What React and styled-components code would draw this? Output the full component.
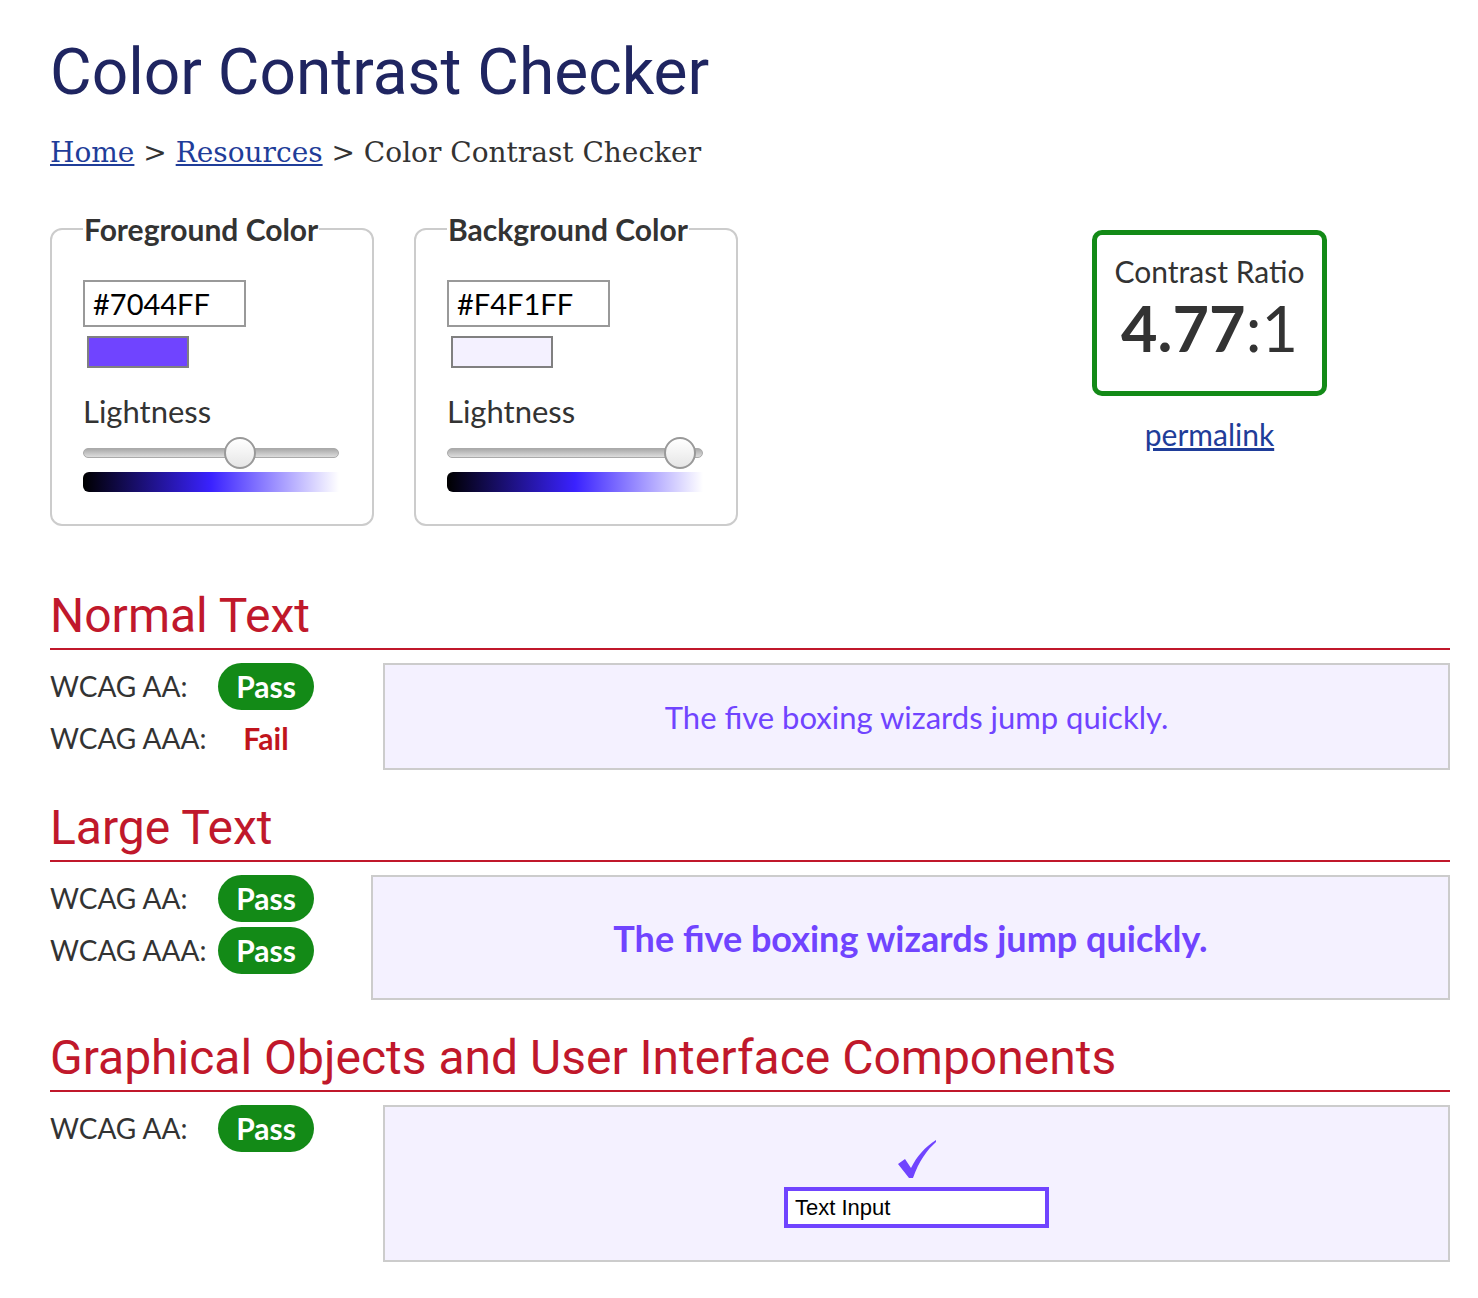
import styled, { createGlobalStyle } from 'styled-components';

const GlobalStyle = createGlobalStyle`
  body {
    margin: 0;
    background: #fff;
    font-family: Lato, "Open Sans", sans-serif;
    color: #333;
  }
`;

const Page = styled.div`
  padding: 0 28px 40px 50px;
`;

const Title = styled.h1`
  font-family: Roboto, sans-serif;
  font-weight: 400;
  font-size: 64px;
  line-height: 80px;
  color: #1f2561;
  margin: 33px 0 0;
`;

const Crumbs = styled.nav`
  font-family: "DejaVu Serif", serif;
  font-size: 28px;
  color: #333;
  margin-top: 23px;
  a {
    color: #1f3d99;
  }
`;

const Top = styled.div`
  display: flex;
  align-items: flex-start;
  margin-top: 42px;
`;

const Panel = styled.fieldset`
  width: 258px;
  border: 2px solid #ccc;
  border-radius: 12px;
  padding: 0 31px 32px;
  margin: 0 40px 0 0;
  box-sizing: content-box;
`;

const Legend = styled.legend`
  font-weight: 700;
  font-size: 30px;
  padding: 0 1px;
  color: #333;
`;

const HexInput = styled.div`
  width: 151px;
  height: 43px;
  border: 2px solid #999;
  margin-top: 33px;
  font-size: 29px;
  line-height: 43px;
  padding-left: 8px;
  color: #000;
`;

const Swatch = styled.div`
  width: 98px;
  height: 28px;
  border: 2px solid #808080;
  background: ${({ $color }) => $color};
  margin: 9px 0 0 4px;
`;

const Label = styled.div`
  font-size: 31px;
  margin-top: 24px;
  line-height: 38px;
`;

const Track = styled.div`
  position: relative;
  height: 8px;
  margin-top: 18px;
  width: 254px;
  border: 1px solid #aaa;
  border-radius: 5px;
  background: linear-gradient(#aaa, #ddd);
`;

const Thumb = styled.div`
  position: absolute;
  top: -12px;
  width: 28px;
  height: 28px;
  margin-left: -15px;
  border-radius: 50%;
  border: 2px solid #999;
  background: linear-gradient(#fff, #e6e6e6);
`;

const Spectrum = styled.div`
  height: 20px;
  width: 256px;
  margin-top: 14px;
  border-radius: 6px 0 0 6px;
  background: linear-gradient(to right, #000, #3a22ff 50%, #fff);
`;

const RatioCol = styled.div`
  margin-left: auto;
  margin-right: 123px;
  margin-top: 19px;
  display: flex;
  flex-direction: column;
  align-items: center;
`;

const RatioBox = styled.div`
  width: 225px;
  height: 156px;
  border: 5px solid #138a17;
  border-radius: 10px;
  text-align: center;
`;

const RatioLabel = styled.div`
  font-size: 30px;
  margin-top: 18px;
`;

const RatioValue = styled.div`
  font-size: 63px;
  font-weight: 700;
  line-height: 78px;
  color: #333;
  span {
    font-weight: 400;
  }
`;

const Permalink = styled.a`
  font-size: 30px;
  color: #1f3d99;
  margin-top: 20px;
`;

const SectionTitle = styled.h2`
  font-family: Roboto, sans-serif;
  font-weight: 400;
  font-size: 48px;
  line-height: 56px;
  color: #c0182b;
  margin: ${({ $top }) => $top}px 0 0;
  padding-bottom: 4px;
  border-bottom: 2px solid #c0182b;
`;

const Row = styled.div`
  display: flex;
  align-items: flex-start;
  margin-top: 13px;
`;

const Results = styled.div`
  width: ${({ $w }) => $w}px;
  flex-shrink: 0;
  display: grid;
  grid-template-columns: 168px 96px;
  row-gap: 5px;
  align-items: center;
`;

const Level = styled.div`
  font-size: 28px;
  line-height: 47px;
`;

const Badge = styled.div`
  height: 47px;
  border-radius: 24px;
  background: ${({ $pass }) => ($pass ? '#138a17' : 'transparent')};
  color: ${({ $pass }) => ($pass ? '#fff' : '#c0141c')};
  font-size: 30px;
  font-weight: 700;
  line-height: 47px;
  text-align: center;
`;

const Sample = styled.div`
  flex: 1;
  height: ${({ $h }) => $h}px;
  background: #f4f1ff;
  border: 2px solid #ccc;
  color: #7044ff;
  font-size: ${({ $size }) => $size}px;
  font-weight: ${({ $bold }) => ($bold ? 700 : 400)};
  display: flex;
  flex-direction: column;
  align-items: center;
  justify-content: center;
`;

const Check = styled.svg`
  width: 40px;
  height: 40px;
  margin: 0 0 8px 0;
`;

const DemoInput = styled.div`
  width: 250px;
  height: 33px;
  border: 4px solid #7044ff;
  background: #fff;
  font-family: "Liberation Sans", Arial, sans-serif;
  font-size: 22px;
  line-height: 33px;
  color: #000;
  padding-left: 7px;
  text-align: left;
  font-weight: 400;
`;

const ColorPanel = ({ title, hex, pos }) => (
  <Panel>
    <Legend>{title}</Legend>
    <HexInput>{hex}</HexInput>
    <Swatch $color={hex} />
    <Label>Lightness</Label>
    <Track>
      <Thumb style={{ left: `${pos}%` }} />
    </Track>
    <Spectrum />
  </Panel>
);

const ResultList = ({ items, width }) => (
  <Results $w={width}>
    {items.map(([lvl, pass]) => [
      <Level key={`${lvl}-l`}>WCAG {lvl}:</Level>,
      <Badge key={`${lvl}-b`} $pass={pass}>{pass ? 'Pass' : 'Fail'}</Badge>,
    ])}
  </Results>
);

export default function App() {
  const sentence = 'The five boxing wizards jump quickly.';
  return (
    <Page>
      <GlobalStyle />
      <Title>Color Contrast Checker</Title>
      <Crumbs>
        <a href="#">Home</a> &gt; <a href="#">Resources</a> &gt; Color Contrast Checker
      </Crumbs>
      <Top>
        <ColorPanel title="Foreground Color" hex="#7044FF" pos={61} />
        <ColorPanel title="Background Color" hex="#F4F1FF" pos={91} />
        <RatioCol>
          <RatioBox>
            <RatioLabel>Contrast Ratio</RatioLabel>
            <RatioValue>
              4.77<span>:1</span>
            </RatioValue>
          </RatioBox>
          <Permalink href="#">permalink</Permalink>
        </RatioCol>
      </Top>

      <SectionTitle $top={62}>Normal Text</SectionTitle>
      <Row>
        <ResultList width={333} items={[['AA', true], ['AAA', false]]} />
        <Sample $h={103} $size={31}>{sentence}</Sample>
      </Row>

      <SectionTitle $top={30}>Large Text</SectionTitle>
      <Row>
        <ResultList width={321} items={[['AA', true], ['AAA', true]]} />
        <Sample $h={121} $size={36} $bold>{sentence}</Sample>
      </Row>

      <SectionTitle $top={30}>Graphical Objects and User Interface Components</SectionTitle>
      <Row>
        <ResultList width={333} items={[['AA', true]]} />
        <Sample $h={153} $size={22}>
          <Check viewBox="0 0 40 40">
            <path d="M1 25 L8 20 L14 29 C20 17 28 8 39 1 L39 3 C30 11 22 22 16 39 L12 39 Z" fill="#7044ff" />
          </Check>
          <DemoInput>Text Input</DemoInput>
        </Sample>
      </Row>
    </Page>
  );
}
